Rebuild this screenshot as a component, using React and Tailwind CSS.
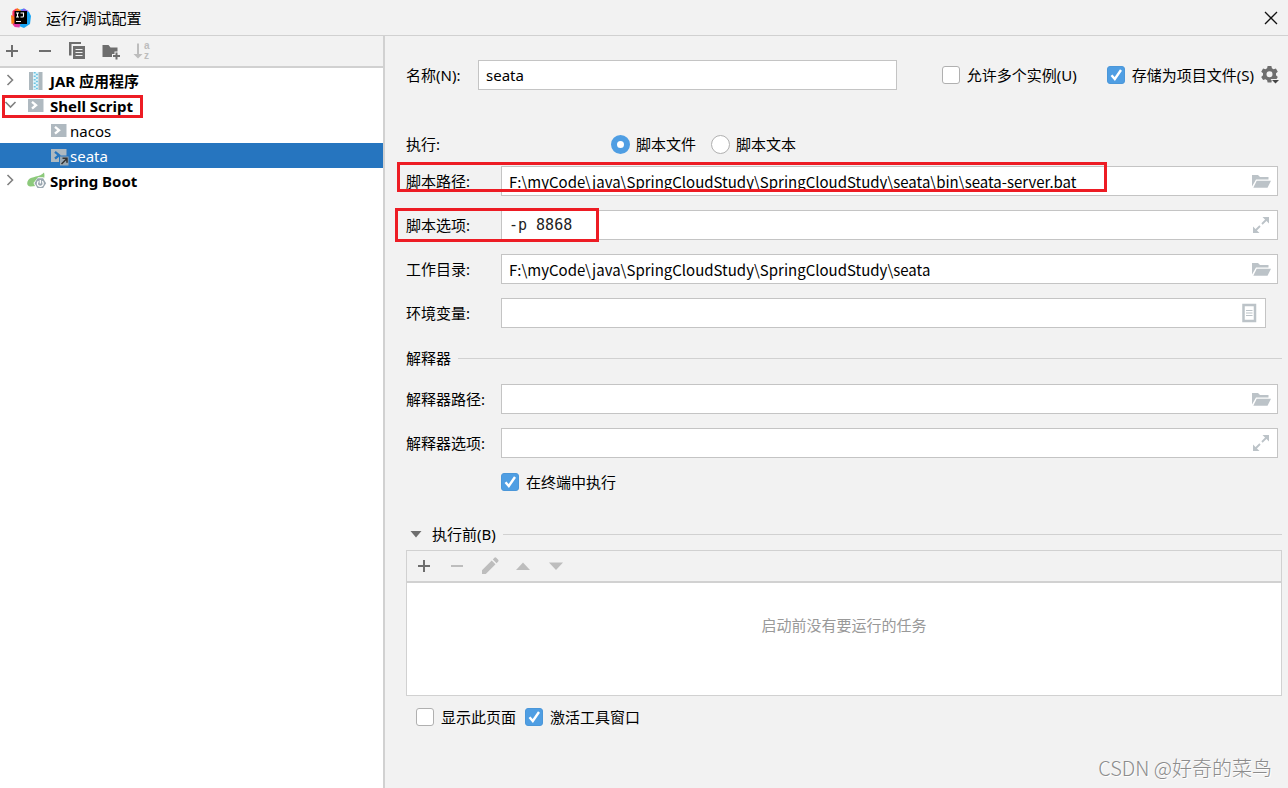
import { useState } from "react";

function PlusIcon({ className = "text-[#6e6e6e]" }) {
  return (
    <svg viewBox="0 0 20 20" className={`w-5 h-5 ${className}`} fill="currentColor">
      <path d="M4 9h5V4h2v5h5v2h-5v5H9v-5H4z" />
    </svg>
  );
}

function MinusIcon({ className = "text-[#6e6e6e]" }) {
  return (
    <svg viewBox="0 0 20 20" className={`w-5 h-5 ${className}`} fill="currentColor">
      <path d="M4 9h12v2H4z" />
    </svg>
  );
}

function CopyIcon() {
  return (
    <svg viewBox="0 0 20 20" className="w-5 h-5">
      <path d="M1 1h12v2H3.500v11.500H1z" fill="#6e6e6e" />
      <path d="M5 5h12v13H5z" fill="#6e6e6e" />
      <path d="M7.500 8.500h7M7.500 11.500h7M7.500 14.500h7" stroke="#f2f2f2" />
    </svg>
  );
}

function NewFolderIcon() {
  return (
    <svg viewBox="0 0 20 20" className="w-5 h-5">
      <path d="M1.500 4h6l2 2.500h7V16h-15z" fill="#6e6e6e" />
      <path d="M15.500 10.500v9M11 15h9" stroke="#f2f2f2" strokeWidth="4" />
      <path d="M15.500 11.500v7M12 15h7" stroke="#6e6e6e" strokeWidth="2" />
    </svg>
  );
}

function SortIcon() {
  return (
    <svg
      viewBox="0 0 20 20"
      className="w-5 h-5 overflow-visible font-['Liberation_Sans',sans-serif] font-bold text-[10px]"
      fill="#bdbdbd"
    >
      <path d="M3 2.500h2V13h3.500L4 17.500-.5 13H3z" />
      <text x="10" y="8">a</text>
      <text x="10" y="18">z</text>
    </svg>
  );
}

function PencilIcon() {
  return (
    <svg viewBox="0 0 20 20" className="w-5 h-5" fill="#bdbdbd">
      <path d="M2 18v-3.800L11.700 4.500l3.800 3.800L5.800 18zM12.800 3.400l1.600-1.600a1.300 1.300 0 0 1 1.800 0l2 2a1.300 1.300 0 0 1 0 1.800l-1.600 1.600z" />
    </svg>
  );
}

function TriangleIcon({ up }) {
  return (
    <svg viewBox="0 0 20 20" className="w-5 h-5" fill="#bdbdbd">
      <path d={up ? "M3 14h14l-7-7.500z" : "M3 6.500h14L10 14z"} />
    </svg>
  );
}

function Chevron({ open }) {
  return (
    <svg viewBox="0 0 20 20" className="w-5 h-5" fill="none" stroke="#808080" strokeWidth="1.600">
      <path d={open ? "M5.500 6l5 5 5-5" : "M7.500 4l5 5-5 5"} />
    </svg>
  );
}

function JarIcon() {
  return (
    <svg viewBox="0 0 20 20" className="w-5 h-5">
      <path d="M2 1h4.500v18H2zM11 1h4.500v18H11z" fill="#adb8be" />
      <path d="M6 1h5.500v18H6z" fill="#e3f4fa" />
      <path d="M7.700 1v18" stroke="#6cc4e2" strokeWidth="2" strokeDasharray="1.500 2" />
      <path d="M9.900 2.700v16.300" stroke="#6cc4e2" strokeWidth="2" strokeDasharray="1.500 2" />
    </svg>
  );
}

function ShellIcon({ active }) {
  return (
    <svg viewBox="0 0 20 20" className="w-5 h-5">
      <path d="M1 3h15.500v13H1z" fill="#afb9c0" />
      <path
        d="M5 5.800l4 3.400L5 12.600"
        fill="none"
        stroke={active ? "#2675bf" : "#fff"}
        strokeWidth="2.400"
      />
      {active && (
        <>
          <path d="M9 9.500H20V20H9z" fill="#2675bf" />
          <path d="M10 10.500H18.500v9H10z" fill="#9aa7b0" />
          <path d="M11.500 18l5-5M12.500 12.300H17v4.500" fill="none" stroke="#333" strokeWidth="1.500" />
        </>
      )}
    </svg>
  );
}

function SpringIcon() {
  return (
    <svg viewBox="0 0 20 20" className="w-5 h-5">
      <path d="M17 1.500c.8 3 .5 5.500-.5 7.500l-7.500 6-5.500.5C0 15.500-.8 11.500 1.500 8.800 4.500 5 13 6.500 17 1.500z" fill="#8cc97b" />
      <path d="M11 6.300h5.500l3.500 5.700-3.500 6H9.500L6.500 12z" fill="#fff" />
      <path d="M10.500 7.300h5.600l3 4.900-3 4.900h-5.600l-3-4.900z" fill="#9aa7b0" />
      <path d="M11.500 10.300a2.900 2.900 0 1 0 3.600 0M13.300 9v3.600" fill="none" stroke="#fff" strokeWidth="1.300" />
    </svg>
  );
}

function LogoIcon() {
  return (
    <svg viewBox="0 0 20 20" className="w-5 h-5">
      <path d="M1.500 3L5 .5 10 3v14l-8 .5L1 13z" fill="#fe315d" />
      <path d="M0 7l3.500 2v6L.5 16z" fill="#f97a12" />
      <path d="M8 2l5-1.500L18 4l2 4-1 8-6 4-5-2z" fill="#18a5f5" />
      <path d="M13 .5L17.500 3 15 5.500 9.500 3z" fill="#8a5cf0" />
      <path d="M6 0l4 2.500L8 4.500H4z" fill="#f97a12" />
      <path d="M2.500 15.500h7l-1 4-5-.5z" fill="#e03ba8" />
      <path d="M3.500 3h12.500v13H3.500z" fill="#000" />
      <path d="M5 5h3M6.500 5v4M5 9h3M9.500 5h3v3q0 1-1 1H9.500M5 13.500h5" fill="none" stroke="#fff" strokeWidth="1.100" />
    </svg>
  );
}

function GearIcon() {
  return (
    <svg viewBox="0 0 20 20" className="w-5 h-5">
      <path
        fill="#6e6e6e"
        fillRule="evenodd"
        d="M7.600 1h3.800l.5 2.300 1.700 1 2.300-.8 1.900 3.200-1.800 1.600v2l1.800 1.600-1.900 3.200-2.300-.8-1.700 1-.5 2.300H7.600l-.5-2.300-1.700-1-2.300.8-1.900-3.200L3 10.300v-2L1.200 6.700l1.900-3.200 2.300.8 1.700-1zM9.500 6.300a3 3 0 1 0 0 6 3 3 0 0 0 0-6z"
      />
      <path d="M10.500 14h9L15 19.500z" fill="#f2f2f2" />
      <path d="M12 15h7l-3.500 3.500z" fill="#454545" />
    </svg>
  );
}

function FolderIcon() {
  return (
    <svg viewBox="0 0 20 20" className="w-5 h-5" fill="#bcc3c8">
      <path d="M1 4h6l2 2h8.500v2.500H5L1 15.500z" />
      <path d="M5.700 9.800H20l-3.500 7H2.300z" />
    </svg>
  );
}

function ExpandIcon() {
  return (
    <svg viewBox="0 0 20 20" className="w-5 h-5">
      <path d="M11.500 2H18v6.500zM2 11.500V18h6.500z" fill="#bcc3c8" />
      <path d="M15.500 4.500L11 9M9 11l-4.500 4.500" stroke="#bcc3c8" strokeWidth="1.800" />
    </svg>
  );
}

function DocIcon() {
  return (
    <svg viewBox="0 0 20 20" className="w-5 h-5" fill="none" stroke="#bcc3c8">
      <path d="M4.500 2h11.500v16H4.500z" strokeWidth="2.500" />
      <path d="M7 7.500h6.500M7 10h6.500M7 12.500h6.500" strokeWidth="1.200" />
    </svg>
  );
}

function Check({ label, defaultChecked }) {
  return (
    <label className="flex items-center gap-[7px] whitespace-nowrap">
      <span className="grid">
        <input
          type="checkbox"
          defaultChecked={defaultChecked}
          className="peer appearance-none col-start-1 row-start-1 w-[18px] h-[18px] rounded-[3px] border border-[#b0b0b0] bg-white checked:bg-[#4f9ee3] checked:border-[#4b97d9]"
        />
        <svg
          viewBox="0 0 18 18"
          className="col-start-1 row-start-1 w-[18px] h-[18px] pointer-events-none invisible peer-checked:visible"
          fill="none"
          stroke="#fff"
          strokeWidth="2.400"
        >
          <path d="M4.500 9.200l3.300 3.800L14 4" />
        </svg>
      </span>
      {label}
    </label>
  );
}

function Radio({ label, defaultChecked }) {
  return (
    <label className="flex items-center gap-[6px] whitespace-nowrap">
      <input
        type="radio"
        name="execute"
        defaultChecked={defaultChecked}
        className="appearance-none w-[19px] h-[19px] rounded-full border border-[#b0b0b0] bg-white checked:border-[6px] checked:border-[#4f9ee3]"
      />
      {label}
    </label>
  );
}

function Mark({ className }) {
  return <span className={`absolute z-10 border-3 border-[#ed1c24] pointer-events-none ${className}`} />;
}

function Field({ id, label, value = "", icon, iconLabel, font = "", narrow, mark }) {
  return (
    <div className="relative flex items-center mr-1">
      <label htmlFor={id} className="w-[95px] shrink-0">{label}</label>
      <div className={`flex flex-1 items-center h-[30px] border border-[#c4c4c4] bg-white ${narrow ? "mr-3" : ""}`}>
        <input
          id={id}
          defaultValue={value}
          className={`flex-1 min-w-0 h-full px-[7px] bg-transparent outline-none ${font}`}
        />
        <button aria-label={iconLabel} className="mr-[6px]">{icon}</button>
      </div>
      {mark && <Mark className={mark} />}
    </div>
  );
}

function TreeRow({ icon, label, child, open, expandable, selected, onClick, mark }) {
  return (
    <li className="relative">
      <button
        onClick={onClick}
        className={`flex items-center w-full h-[25px] ${child ? "pl-[50px]" : "font-bold"} ${
          selected ? "bg-[#2675bf] text-white" : ""
        }`}
      >
        {expandable && <span className="w-[27px]"><Chevron open={open} /></span>}
        <span className={child ? "" : "mr-[3px]"}>{icon}</span>
        {label}
      </button>
      {mark && <Mark className={mark} />}
    </li>
  );
}

const PATH_FONT = "font-['Noto_Sans_CJK_SC',sans-serif] leading-6";
const MONO_FONT = "font-['DejaVu_Sans_Mono',monospace] text-[#222]";

export default function App() {
  const [selected, setSelected] = useState("seata");

  return (
    <div className="relative flex flex-col min-h-screen bg-[#f2f2f2] text-black text-[15px] leading-5 font-['Noto_Sans','Noto_Sans_CJK_SC',sans-serif]">
      <header className="flex items-center h-9 pl-[11px] pr-[7px] border-b border-[#d1d1d1]">
        <LogoIcon />
        <h1 className="ml-[15px] flex-1">运行/调试配置</h1>
        <button aria-label="关闭">
          <svg viewBox="0 0 20 20" className="w-5 h-5" stroke="#111" strokeWidth="1.300">
            <path d="M4 4l12 12M16 4L4 16" />
          </svg>
        </button>
      </header>

      <div className="flex flex-1">
        <aside className="flex flex-col w-[385px] shrink-0 border-r-2 border-[#d1d1d1] bg-white">
          <div className="flex items-center gap-[13px] h-8 pl-[2px] bg-[#f2f2f2] border-b-2 border-[#d1d1d1]">
            <button aria-label="添加"><PlusIcon /></button>
            <button aria-label="移除"><MinusIcon /></button>
            <button aria-label="复制"><CopyIcon /></button>
            <button aria-label="新建文件夹"><NewFolderIcon /></button>
            <button aria-label="排序"><SortIcon /></button>
          </div>
          <ul>
            <TreeRow expandable icon={<JarIcon />} label="JAR 应用程序" />
            <TreeRow
              expandable
              open
              icon={<ShellIcon />}
              label="Shell Script"
              mark="left-[2px] top-[2px] w-[141px] h-[23px]"
            />
            {["nacos", "seata"].map((name) => (
              <TreeRow
                key={name}
                child
                icon={<ShellIcon active={selected === name} />}
                label={name}
                selected={selected === name}
                onClick={() => setSelected(name)}
              />
            ))}
            <TreeRow expandable icon={<SpringIcon />} label="Spring Boot" />
          </ul>
        </aside>

        <main className="flex-1 min-w-0 pt-6 pl-[21px] pr-[6px]">
          <div className="flex items-center mr-[2px]">
            <label htmlFor="name" className="w-[72px] shrink-0">名称(N):</label>
            <input
              id="name"
              defaultValue="seata"
              className="flex-1 min-w-0 h-[30px] px-[7px] border border-[#c4c4c4] bg-white outline-none"
            />
            <div className="flex items-center ml-[45px]">
              <Check label="允许多个实例(U)" />
              <div className="ml-[30px]"><Check label="存储为项目文件(S)" defaultChecked /></div>
              <button aria-label="设置" className="ml-[6px]"><GearIcon /></button>
            </div>
          </div>

          <div className="flex items-center h-5 mt-11">
            <span className="w-[205px]">执行:</span>
            <div className="flex gap-[15px]">
              <Radio label="脚本文件" defaultChecked />
              <Radio label="脚本文本" />
            </div>
          </div>

          <div className="flex flex-col gap-[14px] mt-3">
            <Field
              id="script-path"
              label="脚本路径:"
              value="F:\myCode\java\SpringCloudStudy\SpringCloudStudy\seata\bin\seata-server.bat"
              font={PATH_FONT}
              icon={<FolderIcon />}
              iconLabel="浏览"
              mark="-left-[9px] -top-1 w-[710px] h-[30px]"
            />
            <Field
              id="script-options"
              label="脚本选项:"
              value="-p 8868"
              font={MONO_FONT}
              icon={<ExpandIcon />}
              iconLabel="展开"
              mark="-left-[11px] -top-[2px] w-[204px] h-[34px]"
            />
            <Field
              id="work-dir"
              label="工作目录:"
              value="F:\myCode\java\SpringCloudStudy\SpringCloudStudy\seata"
              font={PATH_FONT}
              icon={<FolderIcon />}
              iconLabel="浏览"
            />
            <Field id="env" label="环境变量:" icon={<DocIcon />} iconLabel="编辑" narrow />
          </div>

          <div className="flex items-center gap-[7px] mt-5">
            <h2>解释器</h2>
            <hr className="flex-1 border-[#d1d1d1]" />
          </div>

          <div className="flex flex-col gap-[14px] mt-4">
            <Field id="interpreter-path" label="解释器路径:" icon={<FolderIcon />} iconLabel="浏览" />
            <Field id="interpreter-options" label="解释器选项:" icon={<ExpandIcon />} iconLabel="展开" />
          </div>

          <div className="h-5 mt-[14px] pl-[95px]">
            <Check label="在终端中执行" defaultChecked />
          </div>

          <div className="flex items-center gap-[7px] mt-8">
            <button className="flex items-center">
              <svg viewBox="0 0 20 20" className="w-5 h-5 mr-[6px]" fill="#6e6e6e">
                <path d="M4.500 7h11L10 13.500z" />
              </svg>
              执行前(B)
            </button>
            <hr className="flex-1 border-[#d1d1d1]" />
          </div>

          <section className="mt-[6px] border border-[#d1d1d1]">
            <div className="flex items-center gap-[13px] h-8 pl-[7px] border-b-2 border-[#d1d1d1]">
              <button aria-label="添加任务"><PlusIcon /></button>
              <button aria-label="移除任务" disabled><MinusIcon className="text-[#bdbdbd]" /></button>
              <button aria-label="编辑任务" disabled><PencilIcon /></button>
              <button aria-label="上移" disabled><TriangleIcon up /></button>
              <button aria-label="下移" disabled><TriangleIcon /></button>
            </div>
            <p className="h-28 pt-8 bg-white text-center text-[#999]">启动前没有要运行的任务</p>
          </section>

          <div className="flex gap-[9px] mt-[11px] pl-[10px]">
            <Check label="显示此页面" />
            <Check label="激活工具窗口" defaultChecked />
          </div>
        </main>
      </div>

      <p className="absolute right-4 bottom-2 text-xl leading-6 text-[#8c8c8c] font-['Noto_Sans_CJK_SC',sans-serif] font-light [text-shadow:1px_1px_0_#fff]">
        CSDN @好奇的菜鸟
      </p>
    </div>
  );
}
